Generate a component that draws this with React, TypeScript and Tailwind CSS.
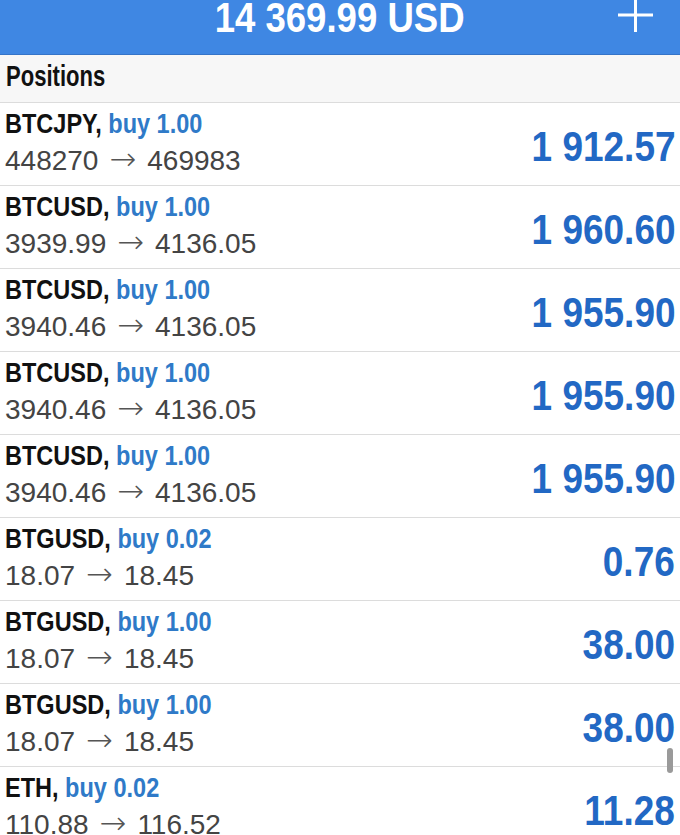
const positions = [
  { symbol: "BTCJPY", side: "buy 1.00", open: "448270", current: "469983", profit: "1 912.57" },
  { symbol: "BTCUSD", side: "buy 1.00", open: "3939.99", current: "4136.05", profit: "1 960.60" },
  { symbol: "BTCUSD", side: "buy 1.00", open: "3940.46", current: "4136.05", profit: "1 955.90" },
  { symbol: "BTCUSD", side: "buy 1.00", open: "3940.46", current: "4136.05", profit: "1 955.90" },
  { symbol: "BTCUSD", side: "buy 1.00", open: "3940.46", current: "4136.05", profit: "1 955.90" },
  { symbol: "BTGUSD", side: "buy 0.02", open: "18.07", current: "18.45", profit: "0.76" },
  { symbol: "BTGUSD", side: "buy 1.00", open: "18.07", current: "18.45", profit: "38.00" },
  { symbol: "BTGUSD", side: "buy 1.00", open: "18.07", current: "18.45", profit: "38.00" },
  { symbol: "ETH", side: "buy 0.02", open: "110.88", current: "116.52", profit: "11.28" },
];

export default function App() {
  return (
    <div className="relative w-[680px] h-[835px] overflow-hidden bg-white font-['Liberation_Sans',Arial,sans-serif]">
      {/* Header */}
      <div className="h-[55px] bg-[#3f87e3] border-b border-[#3574c8] flex justify-center">
        <span className="inline-block origin-center scale-x-[0.87] text-white font-bold text-[42px] leading-[42px] mt-[-3px] whitespace-nowrap">
          14 369.99 USD
        </span>
      </div>
      <svg className="absolute left-[618px] top-[-1px]" width="35" height="34" viewBox="0 0 35 34">
        <line x1="17.5" y1="0" x2="17.5" y2="33" stroke="white" strokeWidth="3" />
        <line x1="0" y1="16" x2="35" y2="16" stroke="white" strokeWidth="3" />
      </svg>

      {/* Section title */}
      <div className="h-[48px] bg-[#f7f7f7] border-b border-[#dcdcdc] pt-[7px] px-[6px]">
        <span className="inline-block origin-left scale-x-[0.76] font-bold text-[29px] leading-[29px] text-[#111]">
          Positions
        </span>
      </div>

      {/* Rows */}
      {positions.map((p, i) => (
        <div key={i} className="h-[83px] border-b border-[#dcdcdc] flex justify-between px-[5px] pt-[4px]">
          <div className="flex flex-col whitespace-nowrap">
            <span className="inline-block origin-left scale-x-[0.84] font-bold text-[28px] leading-[34px] text-[#111]">
              {p.symbol}, <span className="text-[#2f7ac8]">{p.side}</span>
            </span>
            <span className="text-[28px] leading-[34px] mt-[1px] text-[#444]">
              {p.open}
              <span className="mx-[11px] font-['DejaVu_Sans',sans-serif] font-extralight text-[32px] leading-[34px] text-[#555]">→</span>
              {p.current}
            </span>
          </div>
          <span className="self-center mt-[2px] inline-block origin-right scale-x-[0.88] font-bold text-[42px] leading-[42px] text-[#2268c4] whitespace-nowrap">
            {p.profit}
          </span>
        </div>
      ))}

      {/* Scroll indicator */}
      <div className="absolute left-[667px] top-[748px] w-[6px] h-[25px] rounded-sm bg-[#9a9a9a]" />
    </div>
  );
}
